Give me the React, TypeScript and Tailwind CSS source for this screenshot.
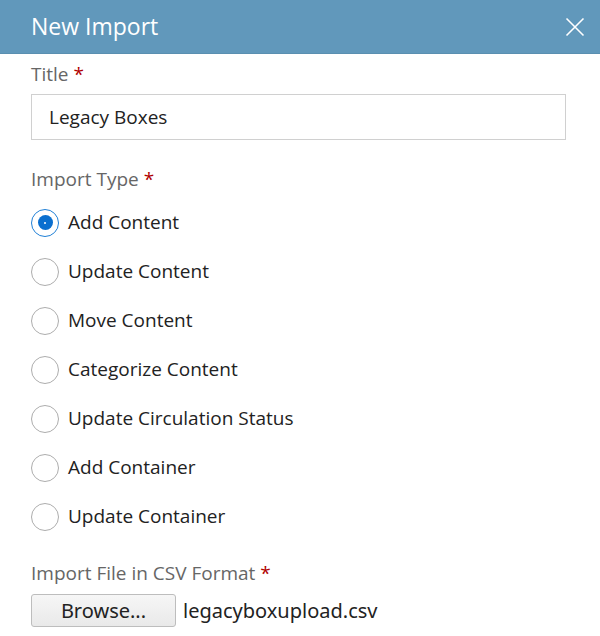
import React from "react";

const options = [
  "Add Content",
  "Update Content",
  "Move Content",
  "Categorize Content",
  "Update Circulation Status",
  "Add Container",
  "Update Container",
];

function Radio({ checked }: { checked: boolean }) {
  if (checked) {
    return (
      <span className="flex h-[28px] w-[28px] shrink-0 items-center justify-center rounded-full border border-[#1f7fd6] bg-white">
        <span className="flex h-[15px] w-[15px] items-center justify-center rounded-full bg-[#0a6fcf]">
          <span className="h-[2px] w-[2px] rounded-full bg-white" />
        </span>
      </span>
    );
  }
  return <span className="h-[28px] w-[28px] shrink-0 rounded-full border border-[#adadad] bg-white" />;
}

export default function App() {
  return (
    <div className="h-[636px] w-[600px] overflow-hidden bg-white" style={{ fontFamily: '"Open Sans", "Noto Sans", sans-serif' }}>
      <div className="flex h-[54px] items-center justify-between border-b border-[#5a8fb0] bg-[#6198bb] pl-[31px] pr-[15px]">
        <span className="text-[23px] leading-none text-white">New Import</span>
        <svg width="20" height="20" viewBox="0 0 20 20">
          <path d="M1.5 1.5 L18.5 18.5 M18.5 1.5 L1.5 18.5" stroke="white" strokeWidth="1.6" fill="none" />
        </svg>
      </div>
      <div className="px-[31px]">
        <div className="mt-[7px] h-[26px] text-[19px] leading-[26px] text-[#666]">
          Title <span className="text-[#b00000]">*</span>
        </div>
        <div className="mt-[7px] flex h-[46px] w-[535px] items-center border border-[#d0d0d0] pl-[17px] text-[19px] text-[#222]">
          Legacy Boxes
        </div>
        <div className="mt-[26px] h-[26px] text-[19px] leading-[26px] text-[#666]">
          Import Type <span className="text-[#b00000]">*</span>
        </div>
        <div className="mt-[6px] flex flex-col">
          {options.map((o, i) => (
            <div key={o} className="flex h-[49px] items-center gap-[9px]">
              <Radio checked={i === 0} />
              <span className="text-[19px] text-[#222]">{o}</span>
            </div>
          ))}
        </div>
        <div className="mt-[19px] h-[26px] text-[19px] leading-[26px] text-[#666]">
          Import File in CSV Format <span className="text-[#b00000]">*</span>
        </div>
        <div className="mt-[8px] flex items-center gap-[7px]" style={{ fontFamily: '"Noto Sans", sans-serif' }}>
          <button className="h-[33px] w-[145px] rounded-[3px] border border-[#bdbdbd] bg-gradient-to-b from-[#f6f6f6] to-[#e9e9e9] text-[20px] leading-none text-[#222]">
            Browse...
          </button>
          <span className="text-[20px] text-[#222]">legacyboxupload.csv</span>
        </div>
      </div>
    </div>
  );
}
